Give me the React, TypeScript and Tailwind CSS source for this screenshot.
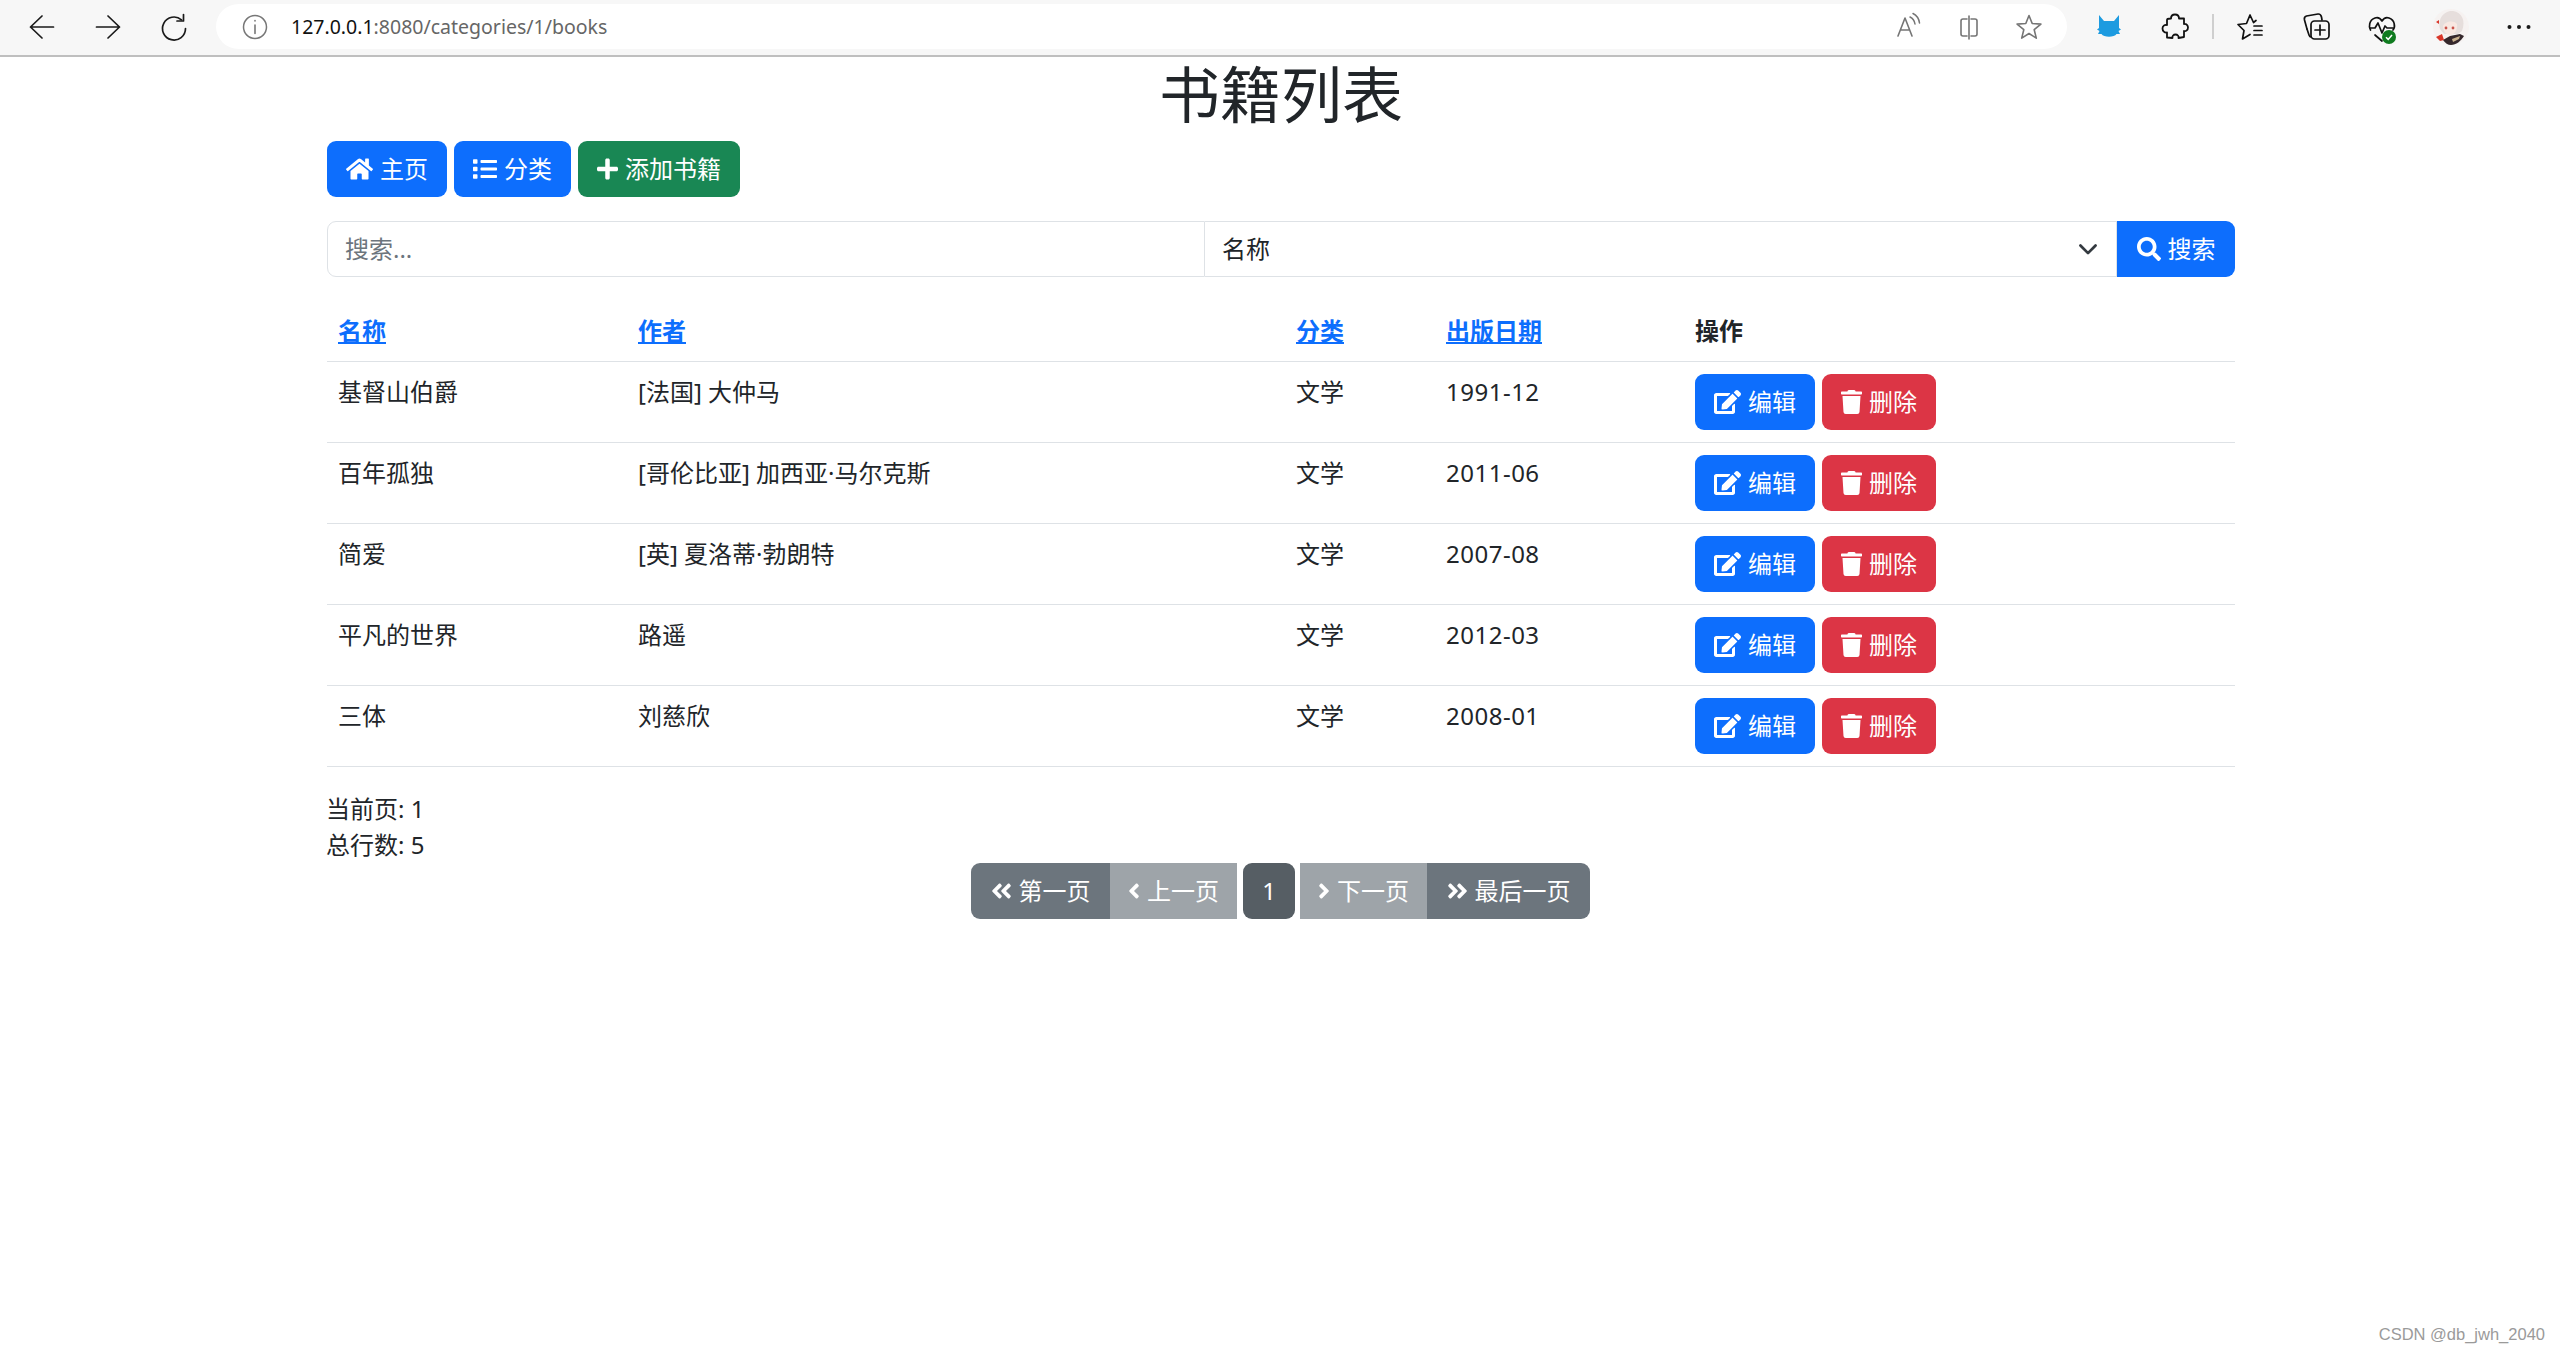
import React from "react";
import {
  FaHome,
  FaList,
  FaPlus,
  FaSearch,
  FaEdit,
  FaTrash,
  FaAngleDoubleLeft,
  FaAngleLeft,
  FaAngleRight,
  FaAngleDoubleRight,
} from "react-icons/fa";

const books = [
  ["基督山伯爵", "[法国] 大仲马", "文学", "1991-12"],
  ["百年孤独", "[哥伦比亚] 加西亚·马尔克斯", "文学", "2011-06"],
  ["简爱", "[英] 夏洛蒂·勃朗特", "文学", "2007-08"],
  ["平凡的世界", "路遥", "文学", "2012-03"],
  ["三体", "刘慈欣", "文学", "2008-01"],
];

function Slot({ children, stroke = "#1a1a1a" }: { children: React.ReactNode; stroke?: string }) {
  return (
    <svg viewBox="0 0 40 40" fill="none" stroke={stroke} strokeWidth={1.7} strokeLinecap="round" strokeLinejoin="round" className="w-[40px] h-[40px] shrink-0">
      {children}
    </svg>
  );
}

function Toolbar() {
  return (
    <div className="h-[57px] flex items-center bg-[#f7f7f7] border-b-2 border-[#bfbfbf] pl-[22px] pb-[2px]">
      <div className="flex gap-[26px]">
        <Slot>
          <path d="M8.5 20H31.5M20 9L8.5 20L20 31" />
        </Slot>
        <Slot>
          <path d="M8.5 20H31.5M20 9L31.5 20L20 31" />
        </Slot>
        <Slot>
          <path d="M27.5 12.8A11.5 11.5 0 1 0 31.5 21.5" />
          <path d="M29.5 7.5V14H23" />
        </Slot>
      </div>
      <div className="ml-[22px] w-[1851px] h-[45px] rounded-full bg-white flex items-center pl-[19px] pr-[18px]">
        <Slot stroke="#777777">
          <circle cx="20" cy="20" r="11.5" strokeWidth={1.5} />
          <path d="M20 18V26.5M20 13.6V13.9" strokeWidth={1.6} />
        </Slot>
        <div className="ml-[16px] text-[19.5px] font-['Noto_Sans',sans-serif] text-[#666666] whitespace-nowrap">
          <span className="text-[#111111]">127.0.0.1</span>:8080/categories/1/books
        </div>
        <div className="ml-auto flex gap-[20px]">
          <Slot stroke="#757575">
            <path d="M9 29L16 11L23 29M12 23H20" strokeWidth={1.6} />
            <path d="M21 10C24 11.5 25.5 14 26 17M24 6.5C28 8.5 30 12 30.5 16" strokeWidth={1.5} />
          </Slot>
          <Slot stroke="#757575">
            <path d="M18 12H14A2 2 0 0 0 12 14V27A2 2 0 0 0 14 29H18M22 12H26A2 2 0 0 1 28 14V27A2 2 0 0 1 26 29H22M20 9V32" strokeWidth={1.6} />
          </Slot>
          <Slot stroke="#757575">
            <polygon points="20,8.5 23.2,16.55 31.9,17.1 25.2,22.7 27.3,31.1 20,26.5 12.7,31.1 14.8,22.7 8.1,17.1 16.8,16.55" strokeWidth={1.6} />
          </Slot>
        </div>
      </div>
      <div className="ml-[22px] flex items-center">
        <svg viewBox="0 0 40 40" className="w-[40px] h-[40px] shrink-0">
          <path d="M10 8L15 14H25L30 8V21L32 22.5L29.5 24L31 27L27.5 27C25.5 30.5 14.5 30.5 12.5 27L9 27L10.5 24L8 22.5L10 21Z" fill="#1d9be0" />
        </svg>
        <div className="ml-[26px]">
          <Slot stroke="#111111">
            <path d="M16 11.5C16 8.5 18 7.5 20 7.5C22.5 7.5 24 9 24 11.5H29V17C31.5 16.5 33 18.5 33 20.5C33 23 31 24.5 29 24V30L23.5 31C24 29 22.5 27.5 20.5 27.5C18.5 27.5 17 29 17.5 31L12 30.5V25.5C9.5 26 7.5 24 7.5 21.5C7.5 19 9.5 17.5 12 18V13C12 12 14 11.5 16 11.5Z" strokeWidth={1.8} />
          </Slot>
        </div>
        <div className="ml-[17px] w-[2px] h-[25px] bg-[#cfcfcf]" />
        <div className="ml-[16px]">
          <Slot stroke="#111111">
            <path d="M26 13.5L23.5 15.5L20 8L16.5 16.5L8 17.5L14 23.5L12.5 32L20 27.5" />
            <path d="M24 19H32M24 23.5H32M24 28H32" />
          </Slot>
        </div>
        <div className="ml-[26px]">
          <Slot stroke="#111111">
            <path d="M11 22L8.5 13C8 11 9 9.5 10.5 9L22 7C24 6.8 25 8 25.5 10L26 13" />
            <path d="M11 22L13 28C13.5 29.5 14.5 30 15 30" />
            <rect x="15" y="14" width="18" height="18" rx="3.5" />
            <path d="M24 18V28M19 23H29" />
          </Slot>
        </div>
        <div className="ml-[26px] relative">
          <Slot stroke="#111111">
            <path d="M8.5 23C6.5 20 7 13 13 11C16 10 18.5 11.5 20 14C21.5 11.5 24 10 27 11C33 13 33.5 20 31 23" />
            <path d="M8 21H13L16 16L20 26L23 19L25 21H31" />
            <path d="M13 28L20 34" />
          </Slot>
          <svg viewBox="0 0 14 14" className="absolute left-[20px] top-[23px] w-[14px] h-[14px]">
            <circle cx="7" cy="7" r="7" fill="#0f7b1f" />
            <path d="M4 7.2L6.2 9.4L10 5" fill="none" stroke="#ffffff" strokeWidth="1.5" />
          </svg>
        </div>
        <svg viewBox="0 0 36 36" className="ml-[31px] w-[36px] h-[36px] shrink-0">
          <circle cx="18" cy="18" r="18" fill="#f6f2f1" />
          <path d="M7 20C4 8 13 1 20 2C29 3 33 12 29 22L25 25H11Z" fill="#e6dedc" />
          <path d="M10 17C12 12 21 11 24 15C25 21 21 26 17 26C13 26 10 22 10 17Z" fill="#f8e8e2" />
          <circle cx="13" cy="19" r="1.4" fill="#c9524a" />
          <circle cx="20" cy="19" r="1.4" fill="#c9524a" />
          <path d="M10 31L17 27L27 25L31 27C28 32 23 36 18 36C15 36 12 34 10 31Z" fill="#35282c" />
          <path d="M3 28L9 25L11 31L7 32Z" fill="#d9372a" />
          <path d="M19 30L27 27L26 30L20 33Z" fill="#c8b18f" />
          <path d="M6 11L3 13L6 15Z" fill="#d9372a" />
        </svg>
        <svg viewBox="0 0 40 40" className="ml-[30px] w-[40px] h-[40px] shrink-0">
          <circle cx="10.5" cy="20" r="2" fill="#1a1a1a" />
          <circle cx="20" cy="20" r="2" fill="#1a1a1a" />
          <circle cx="29.5" cy="20" r="2" fill="#1a1a1a" />
        </svg>
      </div>
    </div>
  );
}

function Btn({
  width,
  color,
  icon,
  label,
}: {
  width: string;
  color: string;
  icon: React.ReactNode;
  label: string;
}) {
  return (
    <a className={`${width} ${color} h-[56px] rounded-[9px] text-white flex items-center justify-center gap-[7px] text-[24px]`}>
      {icon}
      <span>{label}</span>
    </a>
  );
}

export default function App() {
  return (
    <div className="relative h-[1353px] overflow-hidden bg-white text-[#212529] text-[24px] leading-[36px] font-['Noto_Sans','Noto_Sans_CJK_SC',sans-serif]">
      <Toolbar />
      <main className="w-[1908px] ml-[327px]">
        <h1 className="h-[84px] pt-[2px] text-center text-[61px] leading-[72px] font-normal">书籍列表</h1>
        <div className="flex gap-[7px]">
          <Btn width="w-[120px]" color="bg-[#0d6efd]" icon={<FaHome className="w-[27px] h-[24px]" />} label="主页" />
          <Btn width="w-[117px]" color="bg-[#0d6efd]" icon={<FaList className="w-[24px] h-[24px]" />} label="分类" />
          <Btn width="w-[162px]" color="bg-[#198754]" icon={<FaPlus className="w-[21px] h-[24px]" />} label="添加书籍" />
        </div>
        <div className="mt-[24px] flex h-[56px]">
          <div className="w-[878px] border border-[#dee2e6] rounded-l-[9px] pl-[17px] flex items-center text-[#6c757d]">搜索...</div>
          <div className="w-[912px] border-y border-r border-[#dee2e6] pl-[17px] pr-[17px] flex items-center justify-between">
            <span>名称</span>
            <svg viewBox="0 0 16 16" className="w-[22px] h-[22px]" fill="none" stroke="#343a40" strokeWidth={2} strokeLinecap="round" strokeLinejoin="round">
              <path d="M2.5 5.5L8 11L13.5 5.5" />
            </svg>
          </div>
          <a className="w-[118px] bg-[#0d6efd] rounded-r-[9px] text-white flex items-center justify-center gap-[7px]">
            <FaSearch className="w-[24px] h-[24px]" />
            <span>搜索</span>
          </a>
        </div>
        <table className="mt-[25px] w-[1908px] table-fixed border-collapse">
          <colgroup>
            <col className="w-[299px]" />
            <col className="w-[658px]" />
            <col className="w-[150px]" />
            <col className="w-[249px]" />
            <col className="w-[552px]" />
          </colgroup>
          <thead>
            <tr className="border-b border-[#dee2e6]">
              {["名称", "作者", "分类", "出版日期"].map((h, i) => (
                <th key={h} className={`h-[59px] pr-[12px] text-left font-bold align-middle ${i === 0 ? "pl-[11px]" : "pl-[12px]"}`}>
                  <a className="text-[#0d6efd] underline">{h}</a>
                </th>
              ))}
              <th className="h-[59px] px-[12px] text-left font-bold align-middle">操作</th>
            </tr>
          </thead>
          <tbody>
            {books.map((b) => (
              <tr key={b[0]} className="border-b border-[#dee2e6]">
                {b.map((c, i) => (
                  <td key={i} className={`pr-[12px] py-[12px] align-top ${i === 0 ? "pl-[11px]" : "pl-[12px]"} ${i === 3 ? "tracking-[0.5px]" : ""}`}>
                    {c}
                  </td>
                ))}
                <td className="px-[12px] py-[12px] align-top">
                  <div className="flex gap-[7px]">
                    <Btn width="w-[120px]" color="bg-[#0d6efd]" icon={<FaEdit className="w-[27px] h-[24px]" />} label="编辑" />
                    <Btn width="w-[114px]" color="bg-[#dc3545]" icon={<FaTrash className="w-[21px] h-[24px]" />} label="删除" />
                  </div>
                </td>
              </tr>
            ))}
          </tbody>
        </table>
        <div className="mt-[24px] -ml-px">
          <div>当前页: 1</div>
          <div>总行数: 5</div>
        </div>
        <div className="flex justify-center h-[56px] text-white pr-[1px]">
          <a className="w-[139px] bg-[#6c757d] rounded-l-[9px] flex items-center justify-center gap-[7px]">
            <FaAngleDoubleLeft className="w-[21px] h-[24px]" />
            <span>第一页</span>
          </a>
          <a className="w-[127px] bg-[#9ea4a9] flex items-center justify-center gap-[7px]">
            <FaAngleLeft className="w-[12px] h-[24px]" />
            <span>上一页</span>
          </a>
          <a className="w-[52px] ml-[6px] mr-[5px] bg-[#565e64] rounded-[9px] flex items-center justify-center">1</a>
          <a className="w-[127px] bg-[#9ea4a9] flex items-center justify-center gap-[7px]">
            <FaAngleRight className="w-[12px] h-[24px]" />
            <span>下一页</span>
          </a>
          <a className="w-[163px] bg-[#6c757d] rounded-r-[9px] flex items-center justify-center gap-[7px]">
            <FaAngleDoubleRight className="w-[21px] h-[24px]" />
            <span>最后一页</span>
          </a>
        </div>
      </main>
      <div className="absolute right-[15px] bottom-[9px] text-[16.5px] leading-[20px] text-[#9a9a9a] font-['Liberation_Sans',sans-serif]">
        CSDN @db_jwh_2040
      </div>
    </div>
  );
}
